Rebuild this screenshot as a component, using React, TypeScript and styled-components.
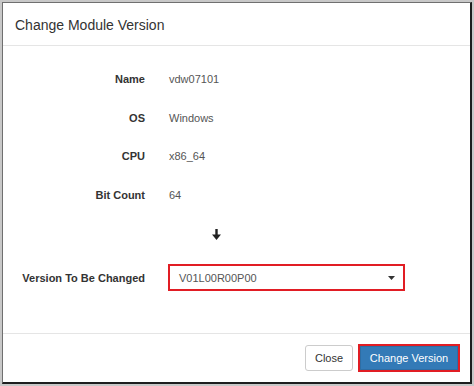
import React from "react";
import styled, { createGlobalStyle } from "styled-components";

const GlobalStyle = createGlobalStyle`
  html, body {
    margin: 0;
    padding: 0;
    background: #c8c8c8;
    font-family: "Liberation Sans", Arial, sans-serif;
  }
`;

const Frame = styled.div`
  width: 474px;
  height: 386px;
  box-sizing: border-box;
  padding: 2px;
`;

const Modal = styled.div`
  height: 100%;
  box-sizing: border-box;
  display: flex;
  flex-direction: column;
  background: #fff;
  border-top: 1px solid #6f6f6f;
  border-left: 1px solid #6f6f6f;
  border-right: 2px solid #1e1e1e;
  border-bottom: 2px solid #1e1e1e;
`;

const Header = styled.div`
  height: 43px;
  display: flex;
  align-items: center;
  padding: 1px 0 0 12px;
  box-sizing: border-box;
  border-bottom: 1px solid #e5e5e5;
`;

const Title = styled.h4`
  margin: 0;
  font-size: 14px;
  font-weight: normal;
  color: #333;
`;

const Body = styled.div`
  flex: 1;
  padding-top: 14px;
  box-sizing: border-box;
`;

const Row = styled.div<{ $h?: number }>`
  display: grid;
  grid-template-columns: 142px 1fr;
  column-gap: 23px;
  align-items: center;
  height: ${(p) => p.$h ?? 38.5}px;
`;

const Label = styled.div`
  text-align: right;
  font-size: 11px;
  font-weight: bold;
  color: #333;
`;

const Value = styled.div`
  font-size: 11px;
  color: #555;
  padding-left: 1px;
`;

const ArrowRow = styled.div`
  height: 40px;
  display: flex;
  align-items: center;
  justify-content: center;
  padding-right: 41px;
`;

const VersionRow = styled(Row)`
  margin-top: 10px;
`;

const Select = styled.div`
  width: 237px;
  height: 27px;
  box-sizing: border-box;
  border: 2px solid #e11d24;
  display: flex;
  align-items: center;
  justify-content: space-between;
  padding: 0 8px 0 9px;
  font-size: 11px;
  color: #555;
`;

const Footer = styled.div`
  height: 48px;
  border-top: 1px solid #e5e5e5;
  display: flex;
  align-items: center;
  justify-content: flex-end;
  gap: 7px;
  padding-right: 12px;
`;

const Button = styled.button<{ $primary?: boolean }>`
  font-family: inherit;
  font-size: 11px;
  box-sizing: border-box;
  border-radius: ${(p) => (p.$primary ? 0 : 3)}px;
  cursor: pointer;
  width: ${(p) => (p.$primary ? 98 : 48)}px;
  height: ${(p) => (p.$primary ? 24 : 26)}px;
  padding: 0;
  color: ${(p) => (p.$primary ? "#fff" : "#333")};
  background: ${(p) => (p.$primary ? "#337ab7" : "#fff")};
  border: 1px solid ${(p) => (p.$primary ? "#2e6da4" : "#ccc")};
  box-shadow: ${(p) => (p.$primary ? "0 0 0 2px #e11d24" : "none")};
`;

const info = [
  ["Name", "vdw07101"],
  ["OS", "Windows"],
  ["CPU", "x86_64"],
  ["Bit Count", "64"],
];

export default function App() {
  return (
    <>
      <GlobalStyle />
      <Frame>
        <Modal>
          <Header>
            <Title>Change Module Version</Title>
          </Header>
          <Body>
            {info.map(([k, v]) => (
              <Row key={k}>
                <Label>{k}</Label>
                <Value>{v}</Value>
              </Row>
            ))}
            <ArrowRow>
              <svg width="9" height="11" viewBox="0 0 9 11">
                <rect x="3.3" y="0" width="2.4" height="6" fill="#222" />
                <polygon points="0,5.5 9,5.5 4.5,11" fill="#222" />
              </svg>
            </ArrowRow>
            <VersionRow $h={27}>
              <Label>Version To Be Changed</Label>
              <Select>
                <span>V01L00R00P00</span>
                <svg width="7" height="4" viewBox="0 0 7 4">
                  <polygon points="0,0 7,0 3.5,4" fill="#333" />
                </svg>
              </Select>
            </VersionRow>
          </Body>
          <Footer>
            <Button>Close</Button>
            <Button $primary>Change Version</Button>
          </Footer>
        </Modal>
      </Frame>
    </>
  );
}
